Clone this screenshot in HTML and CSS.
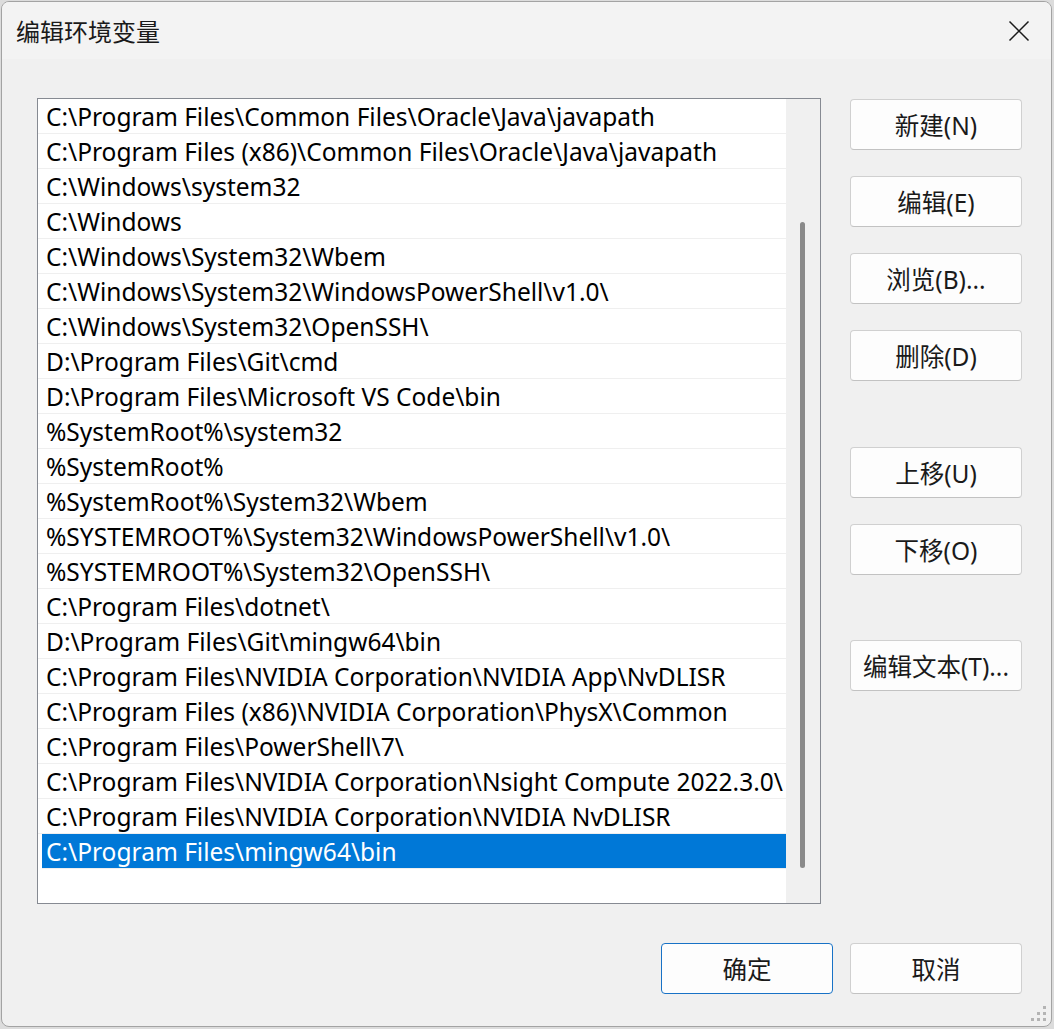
FILE: index.html
```html
<!DOCTYPE html>
<html lang="zh-CN">
<head>
<meta charset="utf-8">
<title>编辑环境变量</title>
<link rel="stylesheet" href="styles.css">
</head>
<body>
<div class="window">
  <div class="titlebar">
    <span class="title">编辑环境变量</span>
    <span class="close" aria-label="关闭">
      <svg width="22" height="22" viewBox="0 0 22 22"><path d="M1.5 1.5 L20.5 20.5 M20.5 1.5 L1.5 20.5" stroke="#1a1a1a" stroke-width="1.5" fill="none"/></svg>
    </span>
  </div>
  <div class="content">
    <div class="main">
      <div class="listbox">
        <div class="rows">
          <div class="row">C:\Program Files\Common Files\Oracle\Java\javapath</div>
          <div class="row">C:\Program Files (x86)\Common Files\Oracle\Java\javapath</div>
          <div class="row">C:\Windows\system32</div>
          <div class="row">C:\Windows</div>
          <div class="row">C:\Windows\System32\Wbem</div>
          <div class="row">C:\Windows\System32\WindowsPowerShell\v1.0\</div>
          <div class="row">C:\Windows\System32\OpenSSH\</div>
          <div class="row">D:\Program Files\Git\cmd</div>
          <div class="row">D:\Program Files\Microsoft VS Code\bin</div>
          <div class="row">%SystemRoot%\system32</div>
          <div class="row">%SystemRoot%</div>
          <div class="row">%SystemRoot%\System32\Wbem</div>
          <div class="row">%SYSTEMROOT%\System32\WindowsPowerShell\v1.0\</div>
          <div class="row">%SYSTEMROOT%\System32\OpenSSH\</div>
          <div class="row">C:\Program Files\dotnet\</div>
          <div class="row">D:\Program Files\Git\mingw64\bin</div>
          <div class="row">C:\Program Files\NVIDIA Corporation\NVIDIA App\NvDLISR</div>
          <div class="row">C:\Program Files (x86)\NVIDIA Corporation\PhysX\Common</div>
          <div class="row">C:\Program Files\PowerShell\7\</div>
          <div class="row">C:\Program Files\NVIDIA Corporation\Nsight Compute 2022.3.0\</div>
          <div class="row">C:\Program Files\NVIDIA Corporation\NVIDIA NvDLISR</div>
          <div class="row selected">C:\Program Files\mingw64\bin</div>
        </div>
        <div class="scrolltrack"><div class="thumb"></div></div>
      </div>
      <div class="side">
        <button class="btn">新建(N)</button>
        <button class="btn">编辑(E)</button>
        <button class="btn">浏览(B)...</button>
        <button class="btn">删除(D)</button>
        <button class="btn group">上移(U)</button>
        <button class="btn">下移(O)</button>
        <button class="btn group2">编辑文本(T)...</button>
      </div>
    </div>
    <div class="footer">
      <button class="btn default">确定</button>
      <button class="btn">取消</button>
    </div>
  </div>
  <div class="grip">
    <span class="dot d1"></span>
    <span class="dot d2"></span><span class="dot d3"></span>
    <span class="dot d4"></span><span class="dot d5"></span><span class="dot d6"></span>
  </div>
</div>
</body>
</html>
```

FILE: styles.css
```css
html, body {
  margin: 0;
  padding: 0;
}
body {
  background: #dcdcdc;
  width: 1054px;
  height: 1029px;
  overflow: hidden;
  font-family: "Noto Sans", "Noto Sans CJK SC", sans-serif;
  color: #000;
}
.window {
  position: relative;
  box-sizing: border-box;
  margin: 1px 0 0 1px;
  width: 1051px;
  height: 1026px;
  border: 1px solid #a3a3a3;
  border-radius: 8px;
  background: #f0f0f0;
  overflow: hidden;
  display: flex;
  flex-direction: column;
}
.titlebar {
  height: 57px;
  flex: none;
  background: #f3f3f3;
  display: flex;
  align-items: center;
  justify-content: space-between;
  padding: 0 21px 0 14px;
}
.title {
  font-family: "Noto Sans CJK SC", sans-serif;
  font-size: 24px;
  color: #1a1a1a;
  line-height: 1;
}
.close {
  display: flex;
  width: 22px;
  height: 22px;
}
.content {
  display: flex;
  flex-direction: column;
  padding: 39px 0 0 35px;
}
.main {
  display: flex;
  align-items: flex-start;
}
.listbox {
  box-sizing: border-box;
  width: 784px;
  height: 806px;
  border: 1px solid #868a92;
  background: #fff;
  display: flex;
  flex: none;
}
.rows {
  width: 748px;
  flex: none;
}
.row {
  box-sizing: border-box;
  height: 35px;
  border-bottom: 1px solid #efefef;
  padding-left: 8px;
  font-size: 24.5px;
  line-height: 36px;
  white-space: nowrap;
  overflow: hidden;
  color: #000;
}
.row.selected {
  margin-left: 4px;
  padding-left: 4px;
  background: #0078d7;
  color: #fff;
}
.scrolltrack {
  width: 34px;
  flex: none;
  background: #f0f0f0;
  padding-top: 123px;
  box-sizing: border-box;
}
.thumb {
  width: 5px;
  height: 646px;
  margin-left: 14px;
  background: #8a8a8a;
  border-radius: 3px;
}
.side {
  display: flex;
  flex-direction: column;
  gap: 26px;
  margin-left: 29px;
  padding-top: 1px;
}
.btn {
  box-sizing: border-box;
  width: 172px;
  height: 51px;
  border: 1px solid #d0d0d0;
  border-bottom-color: #c2c2c2;
  border-radius: 4px;
  background: #fdfdfd;
  font-family: "Noto Sans", "Noto Sans CJK SC", sans-serif;
  font-size: 24.5px;
  color: #1a1a1a;
  padding: 0;
  display: flex;
  align-items: center;
  justify-content: center;
}
.side .group {
  margin-top: 40px;
}
.side .group2 {
  margin-top: 39px;
}
.footer {
  display: flex;
  justify-content: flex-end;
  gap: 17px;
  margin-top: 39px;
  padding-right: 29px;
}
.btn.default {
  border: 1px solid #1872c6;
}
.grip {
  position: absolute;
  right: 4px;
  bottom: 4px;
  width: 16px;
  height: 16px;
}
.dot {
  position: absolute;
  width: 3px;
  height: 3px;
  background: #b4b4b4;
}
.d1 { left: 12px; top: 0; }
.d2 { left: 6px; top: 6px; }
.d3 { left: 12px; top: 6px; }
.d4 { left: 0; top: 12px; }
.d5 { left: 6px; top: 12px; }
.d6 { left: 12px; top: 12px; }
```
